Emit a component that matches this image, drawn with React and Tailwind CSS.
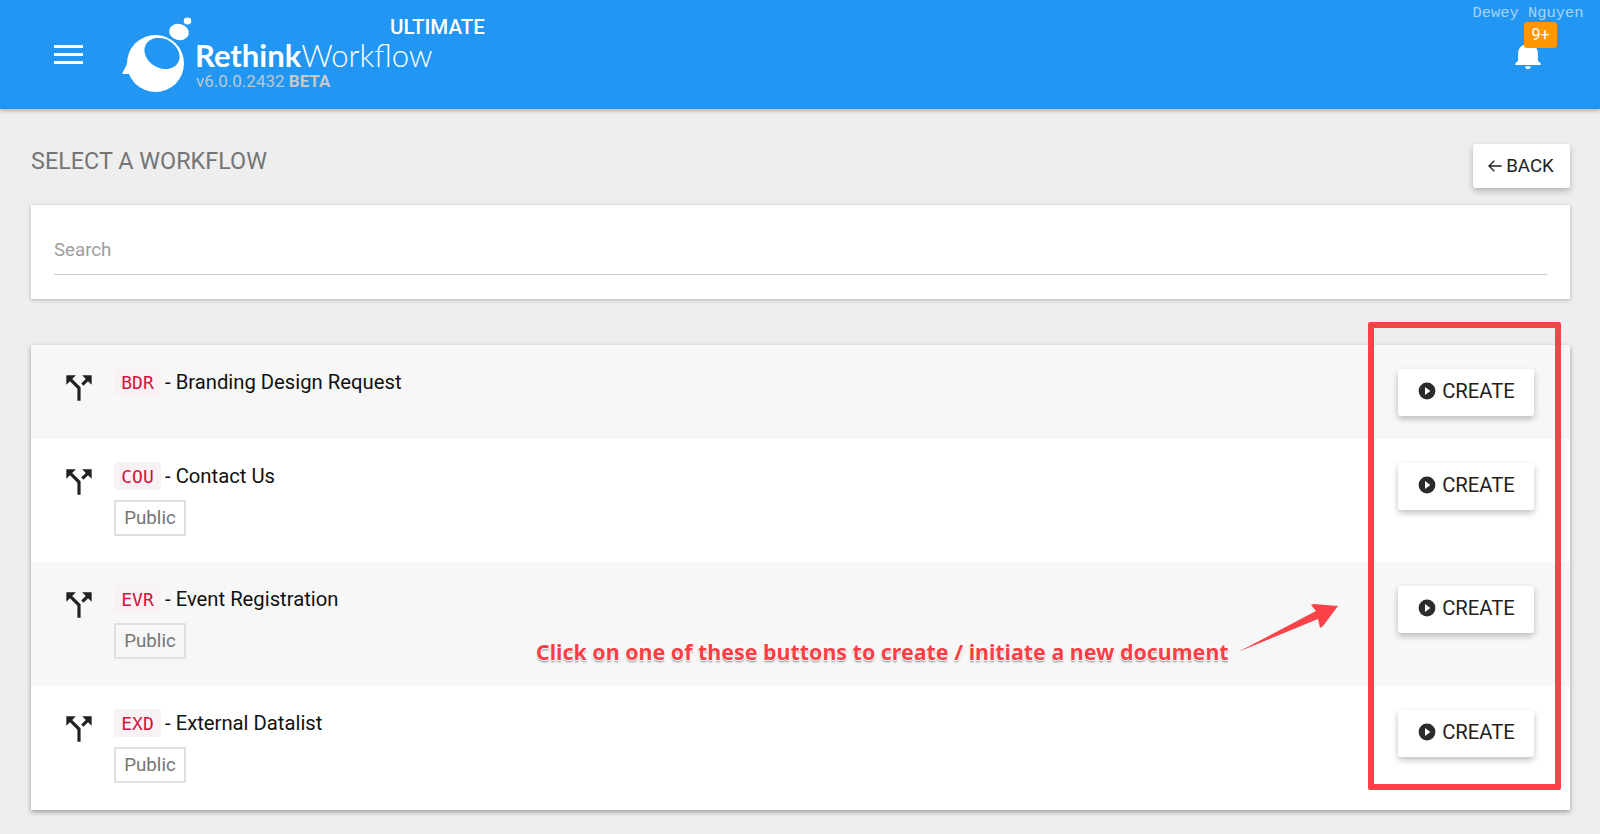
const rows = [
  { code: "BDR", name: "Branding Design Request", tag: false, bg: "bg-[#f7f7f7]", h: "h-[94px]" },
  { code: "COU", name: "Contact Us", tag: true, bg: "bg-white", h: "h-[123px]" },
  { code: "EVR", name: "Event Registration", tag: true, bg: "bg-[#f7f7f7]", h: "h-[124px]" },
  { code: "EXD", name: "External Datalist", tag: true, bg: "bg-white", h: "h-[124px]" },
];

function Logo() {
  return (
    <svg width="80" height="80" viewBox="115 12 80 80" className="shrink-0">
      <g fill="#ffffff">
        <circle cx="155.5" cy="60.5" r="28.5" />
        <path d="M122 71 L139 37 L142 72 L133 71 Z" />
        <ellipse cx="179" cy="29" rx="10" ry="8" transform="rotate(15 179 29)" />
        <ellipse cx="187.5" cy="18" rx="3.8" ry="3.4" />
      </g>
      <ellipse cx="162" cy="50.5" rx="18.5" ry="14.5" fill="#2196f3" transform="rotate(30 162 50.5)" />
    </svg>
  );
}

function SplitIcon() {
  return (
    <svg width="38" height="38" viewBox="0 0 24 24" fill="#212121" className="shrink-0">
      <path d="M14 4l2.29 2.29-2.88 2.88 1.42 1.42 2.88-2.88L20 10V4zm-4 0H4v6l2.29-2.29 4.71 4.7V20h2v-8.41l-5.29-5.3z" />
    </svg>
  );
}

function PlayCircle() {
  return (
    <svg width="20" height="20" viewBox="0 0 20 20" className="mb-[1px] shrink-0">
      <circle cx="10" cy="10" r="8.4" fill="#2b2b2b" />
      <path d="M8 6 L13.4 10 L8 14 Z" fill="#ffffff" />
    </svg>
  );
}

function Row({ code, name, tag, bg, h }) {
  return (
    <div className={`flex ${bg} ${h} pl-[29px] pr-[36px]`}>
      <div className="pt-[24px] w-[54px]">
        <SplitIcon />
      </div>
      <div className="flex-1 pt-[23px]">
        <div className="flex items-center h-[28px] text-[20.25px] text-[#111111]">
          <code className="h-[28px] w-[47px] rounded-[3px] bg-[#f9f2f4] text-center text-[18px] leading-[30px] text-[#d3123e] font-['DejaVu_Sans_Mono',monospace]">
            {code}
          </code>
          <span className="ml-[4px]">- {name}</span>
        </div>
        {tag && (
          <div className="mt-[10px] flex h-[36px] w-[72px] items-center justify-center border-2 border-[#e0e0e0] text-[18.7px] text-[#757575]">
            Public
          </div>
        )}
      </div>
      <div className="pt-[24px]">
        <button className="flex h-[47px] w-[136px] items-center justify-center gap-[5px] rounded-[3px] bg-white pb-[2px] text-[20.25px] text-[#212121] shadow-[0_3px_6px_rgba(0,0,0,0.25)]">
          <PlayCircle />
          CREATE
        </button>
      </div>
    </div>
  );
}

export default function App() {
  return (
    <div className="relative h-[834px] w-[1600px] overflow-hidden bg-[#eeeeee] font-['Roboto',sans-serif]">
      <header className="relative flex h-[109px] items-center justify-between bg-[#2196f3] pl-[54px] pr-[16px] shadow-[0_2px_4px_rgba(0,0,0,0.25)]">
        <div className="flex items-center">
          <div className="flex w-[29px] flex-col gap-[5px]">
            <span className="h-[3px] bg-white" />
            <span className="h-[3px] bg-white" />
            <span className="h-[3px] bg-white" />
          </div>
          <div className="relative ml-[32px] flex items-center">
            <Logo />
            <div className="mt-[17px] flex flex-col">
              <div className="text-[31px] leading-[34px] text-white font-['Lato',sans-serif]">
                <span className="font-bold">Rethink</span>
                <span className="font-light">Workflow</span>
              </div>
              <div className="ml-[1px] mt-[1px] text-[17px] leading-[16px] text-[#bcc8d0]">
                v6.0.0.2432 <span className="font-bold text-[#c8c8c8]">BETA</span>
              </div>
            </div>
            <span className="absolute left-[275px] top-[-3px] text-[20.5px] font-medium text-white">ULTIMATE</span>
          </div>
        </div>
        <div className="flex h-full w-[112px] flex-col items-center pt-[5px]">
          <span className="whitespace-pre text-[15.4px] leading-[16px] text-[#a5d4fa] font-['Liberation_Mono',monospace]">
            Dewey Nguyen
          </span>
          <div className="relative mt-[17px]">
            <svg width="34" height="34" viewBox="0 0 24 24" fill="#ffffff">
              <path d="M12 22c1.1 0 2-.9 2-2h-4a2 2 0 0 0 2 2zm7-6v-5c0-3.1-1.6-5.6-4.5-6.3V4a2.5 2.5 0 0 0-5 0v.7C6.6 5.4 5 7.9 5 11v5l-2 2v1h18v-1l-2-2z" />
            </svg>
            <span className="absolute left-[13px] top-[-16px] flex h-[26px] w-[33px] items-center justify-center rounded-[3px] bg-[#ff9800] text-[16px] text-white">
              9+
            </span>
          </div>
        </div>
      </header>

      <main className="pl-[31px] pr-[30px]">
        <div className="flex items-start justify-between pt-[35px]">
          <h1 className="text-[23.4px] font-normal text-[#757575]">SELECT A WORKFLOW</h1>
          <button className="flex h-[44px] w-[97px] items-center justify-center gap-[3px] rounded-[3px] bg-white pr-[2px] text-[18.7px] text-[#212121] shadow-[0_3px_6px_rgba(0,0,0,0.25)]">
            <svg width="16" height="16" viewBox="0 0 24 24" fill="none" stroke="#212121" strokeWidth="2">
              <path d="M22 12H3M11 4l-8 8 8 8" />
            </svg>
            BACK
          </button>
        </div>

        <section className="mt-[17px] h-[94px] bg-white px-[23px] pt-[30px] shadow-[0_1px_4px_rgba(0,0,0,0.25)]">
          <div className="h-[40px] border-b border-[#cccccc] text-[18.7px] leading-[30px] text-[#9e9e9e]">Search</div>
        </section>

        <section className="mt-[46px] bg-white shadow-[0_2px_5px_rgba(0,0,0,0.35)]">
          {rows.map((r) => (
            <Row key={r.code} {...r} />
          ))}
        </section>
      </main>

      <div className="absolute left-[1368px] top-[322px] h-[468px] w-[193px] rounded-[2px] border-[6px] border-[#fb4248]" />

      <span className="absolute left-[536px] top-[636px] whitespace-nowrap text-[21.4px] font-bold leading-[32px] text-[#fb3e45] font-['Noto_Sans',sans-serif] [text-shadow:0_1px_0_#fff,1px_0_0_#fff,-1px_0_0_#fff,0_-1px_0_#fff,0_2px_2px_rgba(0,0,0,0.45)]">
        Click on one of these buttons to create / initiate a new document
      </span>

      <svg className="absolute left-[1230px] top-[596px]" width="116" height="64" viewBox="1230 596 116 64">
        <path d="M1238 652 L1316 611 L1311 605 L1314 604 L1338 606 L1323 626 L1320 628 L1318 619 Z" fill="#fb4248" />
      </svg>
    </div>
  );
}
